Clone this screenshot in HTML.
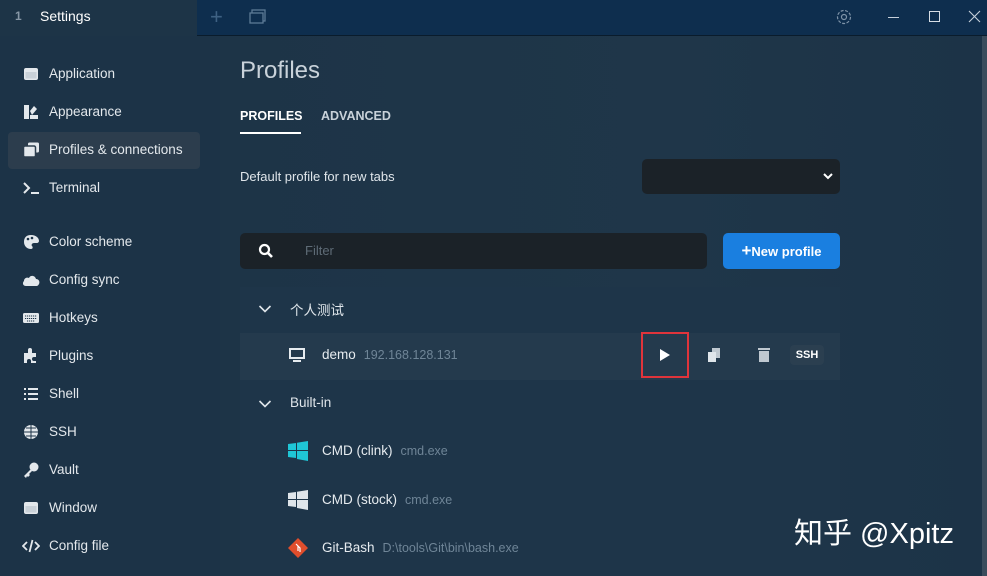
<!DOCTYPE html>
<html><head><meta charset="utf-8"><style>
*{box-sizing:border-box;margin:0;padding:0}
body{width:987px;height:576px;overflow:hidden;background:#1d3447;font-family:"Liberation Sans","Noto Sans CJK SC",sans-serif;color:#e8ecef;position:relative}
.top{position:absolute;left:0;top:0;width:987px;height:36px;background:#0e2e4e;border-bottom:1px solid #0a1c2c}
.tab{position:absolute;left:0;top:0;width:197px;height:36px;background:#1d3447}
.abs{position:absolute}
.side{position:absolute;left:0;top:36px;width:220px;height:540px;background:#1c3347}
.item{position:absolute;left:22px;font-size:13.5px;color:#e3e8ec;height:20px;line-height:20px;display:flex;align-items:center}
.item svg{width:18px;height:18px;margin-right:9px;flex:none}
.main{position:absolute;left:220px;top:36px;width:762px;height:540px;background:linear-gradient(90deg,#1d3447,#1f3649 60%,#1c3347)}
.sub{color:#6f8597;font-size:12.5px;margin-left:8px}
.nm{font-size:13.5px;color:#e6ebef}
</style></head><body>
<div class="top"></div>
<div class="tab"></div>
<div class="abs" style="left:15px;top:9px;font-size:12px;color:#8797a6;font-weight:bold">1</div>
<div class="abs" style="left:40px;top:8px;font-size:14px;color:#fff">Settings</div>
<div class="abs" style="left:210px;top:4px;font-size:22px;color:#3e6183">+</div>
<svg class="abs" style="left:249px;top:9px" width="18" height="16"><rect x="3" y="1" width="13" height="11" fill="none" stroke="#5d7a96" stroke-width="1.3"/><rect x="1" y="4" width="13" height="10" fill="#0e2e4e" stroke="#5d7a96" stroke-width="1.3"/></svg>
<svg class="abs" style="left:835px;top:8px" width="18" height="18" viewBox="0 0 18 18"><circle cx="9" cy="9" r="6.5" fill="none" stroke="#7e93a8" stroke-width="1.2" stroke-dasharray="3 1.5"/><circle cx="9" cy="9" r="2.5" fill="none" stroke="#7e93a8" stroke-width="1.2"/></svg>
<div class="abs" style="left:888px;top:17px;width:11px;height:1px;background:#c6d0da"></div>
<div class="abs" style="left:929px;top:11px;width:11px;height:11px;border:1px solid #d6dde4"></div>
<svg class="abs" style="left:968px;top:10px" width="13" height="13"><path d="M1 1L12 12M12 1L1 12" stroke="#c6d0da" stroke-width="1.1"/></svg>

<div class="side"></div>
<div class="abs" style="left:8px;top:132px;width:192px;height:37px;background:#2c3d4d;border-radius:4px"></div>
<div class="item" style="top:64px"><svg viewBox="0 0 18 18"><rect x="2" y="3" width="14" height="12" rx="2" fill="#e3e8ec"/><rect x="3.5" y="7" width="11" height="6.5" fill="#c9d1d8"/></svg>Application</div>
<div class="item" style="top:102px"><svg viewBox="0 0 18 18"><rect x="2" y="2" width="5" height="14" fill="#e3e8ec"/><path d="M8 8L12 3L15 6L10 12Z" fill="#e3e8ec"/><rect x="8" y="12" width="8" height="4" fill="#e3e8ec"/></svg>Appearance</div>
<div class="item" style="top:140px"><svg viewBox="0 0 18 18"><rect x="6" y="1.5" width="11" height="10" rx="1.5" fill="#e3e8ec"/><rect x="1.5" y="5" width="12" height="11" rx="1.5" fill="#e3e8ec" stroke="#2c3d4d" stroke-width="1.5"/></svg>Profiles &amp; connections</div>
<div class="item" style="top:178px"><svg viewBox="0 0 18 18"><path d="M2 4L7 9L2 14" stroke="#e3e8ec" stroke-width="2" fill="none"/><rect x="9" y="13" width="8" height="2" fill="#e3e8ec"/></svg>Terminal</div>
<div class="item" style="top:232px"><svg viewBox="0 0 18 18"><path d="M9 2C4 2 2 5 2 9c0 4 3 7 7 7 2 0 2-2 1-3s0-3 2-3h3c1 0 2-1 2-2 0-3-3-6-8-6z" fill="#e3e8ec"/><circle cx="6" cy="6" r="1.3" fill="#1c3347"/><circle cx="10" cy="5" r="1.3" fill="#1c3347"/></svg>Color scheme</div>
<div class="item" style="top:270px"><svg viewBox="0 0 18 18"><path d="M4 15C1 15 0 12 2 10c0-3 3-4 5-3 1-3 6-3 7 1 3 0 4 3 3 5-1 2-2 2-3 2z" fill="#e3e8ec"/></svg>Config sync</div>
<div class="item" style="top:308px"><svg viewBox="0 0 18 18"><rect x="1" y="4" width="16" height="10" rx="1.5" fill="#e3e8ec"/><path d="M3 7H15M3 9.5H15M5 12H13" stroke="#1c3347" stroke-width="1" stroke-dasharray="1.2 0.8"/></svg>Hotkeys</div>
<div class="item" style="top:346px"><svg viewBox="0 0 18 18"><path d="M2 6H6V3A2 2 0 0 1 10 3V6H14V10H12A2 2 0 0 0 12 14H14V16H9V14A2 2 0 0 0 5 14V16H2Z" fill="#e3e8ec"/></svg>Plugins</div>
<div class="item" style="top:384px"><svg viewBox="0 0 18 18"><path d="M2 4H4M2 9H4M2 14H4M6 4H16M6 9H16M6 14H16" stroke="#e3e8ec" stroke-width="2"/></svg>Shell</div>
<div class="item" style="top:422px"><svg viewBox="0 0 18 18"><circle cx="9" cy="9" r="7" fill="#e3e8ec"/><path d="M2 9H16M9 2V16M4 5H14M4 13H14" stroke="#1c3347" stroke-width="1"/></svg>SSH</div>
<div class="item" style="top:460px"><svg viewBox="0 0 18 18"><circle cx="12" cy="6" r="4.5" fill="#e3e8ec"/><path d="M9 8L2 15L4 17L5 15L6 16L8 14L7 13L10 10" fill="#e3e8ec"/></svg>Vault</div>
<div class="item" style="top:498px"><svg viewBox="0 0 18 18"><rect x="2" y="3" width="14" height="12" rx="2" fill="#e3e8ec"/><rect x="3.5" y="7" width="11" height="6.5" fill="#c9d1d8"/></svg>Window</div>
<div class="item" style="top:536px"><svg viewBox="0 0 18 18"><path d="M5 5L1 9L5 13M13 5L17 9L13 13M10.5 3L7.5 15" stroke="#e3e8ec" stroke-width="1.8" fill="none"/></svg>Config file</div>

<div class="main"></div>
<div class="abs" style="left:982px;top:36px;width:5px;height:540px;background:#3a4c5c"></div>
<div class="abs" style="left:240px;top:57px;font-size:24px;color:#c9d2da;font-weight:300">Profiles</div>
<div class="abs" style="left:240px;top:109px;font-size:12.5px;font-weight:bold;color:#fff">PROFILES</div>
<div class="abs" style="left:240px;top:132px;width:61px;height:2px;background:#fff"></div>
<div class="abs" style="left:321px;top:109px;font-size:12.5px;font-weight:bold;color:#c9d2da">ADVANCED</div>
<div class="abs" style="left:240px;top:169px;font-size:13px;color:#dfe5ea">Default profile for new tabs</div>
<div class="abs" style="left:642px;top:159px;width:198px;height:35px;background:#1b2228;border-radius:5px"></div>
<svg class="abs" style="left:823px;top:172px" width="10" height="8"><path d="M1 2L5 6L9 2" stroke="#fff" stroke-width="2" fill="none"/></svg>
<div class="abs" style="left:240px;top:233px;width:467px;height:36px;background:#1b2228;border-radius:5px"></div>
<svg class="abs" style="left:258px;top:243px" width="16" height="16"><circle cx="6.5" cy="6.5" r="4.5" fill="none" stroke="#fff" stroke-width="2.2"/><path d="M10 10L14 14" stroke="#fff" stroke-width="2.6"/></svg>
<div class="abs" style="left:305px;top:243px;font-size:13px;color:#5e6b76">Filter</div>
<div class="abs" style="left:723px;top:233px;width:117px;height:36px;background:#1a7fe0;border-radius:5px;color:#fff;font-size:13px;font-weight:bold;text-align:center;line-height:36px"><span style="font-size:17px">+</span>New profile</div>

<div class="abs" style="left:240px;top:287px;width:600px;height:289px;background:#1e3549"></div>
<svg class="abs" style="left:258px;top:304px" width="14" height="10"><path d="M1.5 2L7 7.5L12.5 2" stroke="#dfe5ea" stroke-width="1.6" fill="none"/></svg>
<div class="abs" style="left:290px;top:299px;font-size:13.5px;color:#dfe5ea">个人测试</div>
<div class="abs" style="left:240px;top:333px;width:600px;height:47px;background:#243a4d"></div>
<svg class="abs" style="left:288px;top:347px" width="18" height="16"><rect x="1" y="1" width="16" height="11" fill="#e6ebef"/><rect x="3" y="3" width="12" height="7" fill="#243a4d"/><rect x="5" y="13" width="8" height="2" fill="#e6ebef"/></svg>
<div class="abs nm" style="left:322px;top:347px">demo<span class="sub">192.168.128.131</span></div>
<div class="abs" style="left:641px;top:332px;width:48px;height:46px;border:2px solid #e0343b"></div>
<svg class="abs" style="left:659px;top:348px" width="12" height="14"><path d="M1 1L11 7L1 13Z" fill="#fff"/></svg>
<svg class="abs" style="left:706px;top:347px" width="16" height="16"><rect x="6" y="1" width="8" height="10" fill="#bfc8d0"/><rect x="2" y="5" width="8" height="10" fill="#dfe5ea"/></svg>
<svg class="abs" style="left:757px;top:347px" width="14" height="16"><rect x="1" y="1" width="12" height="2" fill="#bfc8d0"/><rect x="2" y="4" width="10" height="11" fill="#bfc8d0"/></svg>
<div class="abs" style="left:790px;top:345px;width:34px;height:20px;background:#2b3f50;border-radius:4px;font-size:11px;font-weight:bold;color:#fff;text-align:center;line-height:20px">SSH</div>
<svg class="abs" style="left:258px;top:399px" width="14" height="10"><path d="M1.5 2L7 7.5L12.5 2" stroke="#dfe5ea" stroke-width="1.6" fill="none"/></svg>
<div class="abs" style="left:290px;top:395px;font-size:13.5px;color:#dfe5ea">Built-in</div>
<svg class="abs" style="left:288px;top:441px" width="20" height="20"><path d="M0 3L8 2V9H0ZM9 1.8L20 0V9H9ZM0 10H8V17L0 16ZM9 10H20V20L9 18Z" fill="#1fc6d6"/></svg>
<div class="abs nm" style="left:322px;top:443px">CMD (clink)<span class="sub">cmd.exe</span></div>
<svg class="abs" style="left:288px;top:490px" width="20" height="20"><path d="M0 3L8 2V9H0ZM9 1.8L20 0V9H9ZM0 10H8V17L0 16ZM9 10H20V20L9 18Z" fill="#dfe5ea"/></svg>
<div class="abs nm" style="left:322px;top:492px">CMD (stock)<span class="sub">cmd.exe</span></div>
<svg class="abs" style="left:287px;top:537px" width="22" height="22"><path d="M11 1L21 11L11 21L1 11Z" fill="#e04e2c"/><path d="M9 7L13 11V15M11 9V14" stroke="#fff" stroke-width="1.2" fill="none"/></svg>
<div class="abs nm" style="left:322px;top:540px">Git-Bash<span class="sub">D:\tools\Git\bin\bash.exe</span></div>
<div class="abs" style="left:794px;top:510px;font-size:29px;color:#fff;white-space:nowrap">知乎 @Xpitz</div>
</body></html>
